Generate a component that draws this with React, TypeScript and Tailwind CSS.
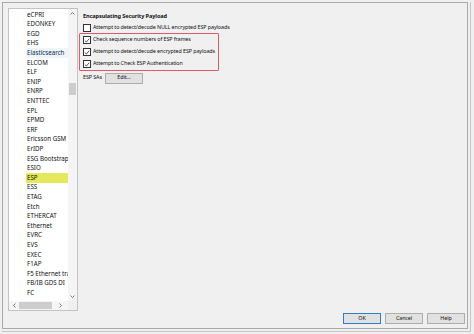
import React from 'react';

const protocols = [
    'eCPRI', 'EDONKEY', 'EGD', 'EHS', 'Elasticsearch', 'ELCOM', 'ELF', 'ENIP', 'ENRP', 'ENTTEC',
    'EPL', 'EPMD', 'ERF', 'Ericsson GSM', 'ErIDP', 'ESG Bootstrap', 'ESIO', 'ESP', 'ESS', 'ETAG',
    'Etch', 'ETHERCAT', 'Ethernet', 'EVRC', 'EVS', 'EXEC', 'F1AP', 'F5 Ethernet trailer', 'FB/IB GDS DI', 'FC',
];

const Check = ({ checked }: { checked: boolean }) => (
    <div className="w-[8px] h-[8px] border border-[#333] bg-white flex items-center justify-center shrink-0">
        {checked && (
            <svg width="7" height="7" viewBox="0 0 7 7">
                <path d="M1 3.6 L2.8 5.3 L6 1.4" fill="none" stroke="#222" strokeWidth="0.9" />
            </svg>
        )}
    </div>
);

const CheckRow = ({ label, checked }: { label: string; checked: boolean }) => (
    <div className="h-[12px] flex items-center gap-[2px] whitespace-nowrap">
        <Check checked={checked} />
        <span>{label}</span>
    </div>
);

const Button = ({ label, primary }: { label: string; primary?: boolean }) => (
    <div
        className={`w-[38px] h-[11px] flex items-center justify-center bg-[#e1e1e1] border ${
            primary ? 'border-[#2f7fd0]' : 'border-[#adadad]'
        }`}
    >
        {label}
    </div>
);

export default function App() {
    return (
        <div
            className="w-[474px] h-[334px] bg-[#f0f0f0] pt-[2px] pl-[2px] text-[5.4px] tracking-[-0.1px] leading-none text-[#111] overflow-hidden"
            style={{ fontFamily: '"Noto Sans", "Open Sans", sans-serif' }}
        >
            <div className="w-[469px] h-[330px] border-r border-b border-[#c6c6c6]">
                <div className="w-[466px] h-[327px] border border-[#a9a9a9] flex flex-col pt-[5px] pl-[5px]">
                    <div className="flex h-[303px]">
                        {/* protocol tree */}
                        <div className="w-[70px] h-full border border-[#c3c3c3] bg-white flex flex-col">
                            <div className="flex flex-1 min-h-0">
                                <div className="flex-1 min-w-0 pt-[1px] overflow-hidden text-[6.2px] tracking-normal">
                                    {protocols.map((p) => (
                                        <div key={p} className="h-[9.6px] flex pl-[17px]">
                                            <div
                                                className={`flex-1 flex items-center pl-[1px] whitespace-nowrap overflow-hidden ${
                                                    p === 'ESP'
                                                        ? 'bg-[#e4e85a]'
                                                        : p === 'Elasticsearch'
                                                        ? 'bg-[#eef5fb] text-[#0d2a4a]'
                                                        : ''
                                                }`}
                                            >
                                                {p}
                                            </div>
                                        </div>
                                    ))}
                                </div>
                                <div className="w-[9px] bg-[#f5f5f5] flex flex-col items-center">
                                    <div className="h-[9px] flex items-center justify-center">
                                        <svg width="5" height="3" viewBox="0 0 5 3">
                                            <path d="M0.5 2.5 L2.5 0.5 L4.5 2.5" fill="none" stroke="#606060" strokeWidth="0.8" />
                                        </svg>
                                    </div>
                                    <div className="mt-[65px] w-[7px] h-[12px] bg-[#cdcdcd]" />
                                    <div className="flex-1" />
                                    <div className="h-[9px] flex items-center justify-center">
                                        <svg width="5" height="3" viewBox="0 0 5 3">
                                            <path d="M0.5 0.5 L2.5 2.5 L4.5 0.5" fill="none" stroke="#606060" strokeWidth="0.8" />
                                        </svg>
                                    </div>
                                </div>
                            </div>
                            <div className="h-[9px] flex">
                                <div className="flex-1 bg-[#f5f5f5] flex items-center">
                                    <div className="w-[10px] flex items-center justify-center">
                                        <svg width="3" height="5" viewBox="0 0 3 5">
                                            <path d="M2.5 0.5 L0.5 2.5 L2.5 4.5" fill="none" stroke="#606060" strokeWidth="0.8" />
                                        </svg>
                                    </div>
                                    <div className="w-[33px] h-[7px] bg-[#cdcdcd]" />
                                    <div className="flex-1 flex items-center justify-center">
                                        <svg width="3" height="5" viewBox="0 0 3 5">
                                            <path d="M0.5 0.5 L2.5 2.5 L0.5 4.5" fill="none" stroke="#606060" strokeWidth="0.8" />
                                        </svg>
                                    </div>
                                </div>
                                <div className="w-[9px] bg-[#f0f0f0]" />
                            </div>
                        </div>

                        {/* ESP preferences */}
                        <div className="ml-[1px] pt-[3px] flex flex-col">
                            <div className="h-[11px] pl-[4px] flex items-center font-bold whitespace-nowrap text-[5.6px]">
                                Encapsulating Security Payload
                            </div>
                            <div className="pl-[4px] h-[11px] flex items-center">
                                <CheckRow label="Attempt to detect/decode NULL encrypted ESP payloads" checked={false} />
                            </div>
                            <div className="w-[140px] border border-[#dc5b68] rounded-[1px] pl-[3px]">
                                <CheckRow label="Check sequence numbers of ESP frames" checked />
                                <CheckRow label="Attempt to detect/decode encrypted ESP payloads" checked />
                                <CheckRow label="Attempt to Check ESP Authentication" checked />
                            </div>
                            <div className="mt-[1px] pl-[4px] h-[12px] flex items-center whitespace-nowrap">
                                <span className="w-[22px]">ESP SAs</span>
                                <div className="w-[38px] h-[11px] flex items-center justify-center bg-[#e1e1e1] border border-[#adadad]">
                                    Edit...
                                </div>
                            </div>
                        </div>
                    </div>

                    {/* dialog buttons */}
                    <div className="mt-[2px] pr-[2px] flex justify-end gap-[4px]">
                        <Button label="OK" primary />
                        <Button label="Cancel" />
                        <Button label="Help" />
                    </div>
                </div>
            </div>
        </div>
    );
}
